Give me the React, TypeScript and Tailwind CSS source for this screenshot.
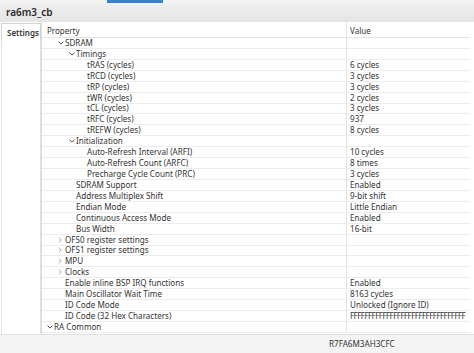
import React from "react";

type Row = { l: number; t: "e" | "c" | "x"; p: string; v?: string };

const rows: Row[] = [
  { l: 1, t: "e", p: "SDRAM" },
  { l: 2, t: "e", p: "Timings" },
  { l: 3, t: "x", p: "tRAS (cycles)", v: "6 cycles" },
  { l: 3, t: "x", p: "tRCD (cycles)", v: "3 cycles" },
  { l: 3, t: "x", p: "tRP (cycles)", v: "3 cycles" },
  { l: 3, t: "x", p: "tWR (cycles)", v: "2 cycles" },
  { l: 3, t: "x", p: "tCL (cycles)", v: "3 cycles" },
  { l: 3, t: "x", p: "tRFC (cycles)", v: "937" },
  { l: 3, t: "x", p: "tREFW (cycles)", v: "8 cycles" },
  { l: 2, t: "e", p: "Initialization" },
  { l: 3, t: "x", p: "Auto-Refresh Interval (ARFI)", v: "10 cycles" },
  { l: 3, t: "x", p: "Auto-Refresh Count (ARFC)", v: "8 times" },
  { l: 3, t: "x", p: "Precharge Cycle Count (PRC)", v: "3 cycles" },
  { l: 2, t: "x", p: "SDRAM Support", v: "Enabled" },
  { l: 2, t: "x", p: "Address Multiplex Shift", v: "9-bit shift" },
  { l: 2, t: "x", p: "Endian Mode", v: "Little Endian" },
  { l: 2, t: "x", p: "Continuous Access Mode", v: "Enabled" },
  { l: 2, t: "x", p: "Bus Width", v: "16-bit" },
  { l: 1, t: "c", p: "OFS0 register settings" },
  { l: 1, t: "c", p: "OFS1 register settings" },
  { l: 1, t: "c", p: "MPU" },
  { l: 1, t: "c", p: "Clocks" },
  { l: 1, t: "x", p: "Enable inline BSP IRQ functions", v: "Enabled" },
  { l: 1, t: "x", p: "Main Oscillator Wait Time", v: "8163 cycles" },
  { l: 1, t: "x", p: "ID Code Mode", v: "Unlocked (Ignore ID)" },
  { l: 1, t: "x", p: "ID Code (32 Hex Characters)", v: "FFFFFFFFFFFFFFFFFFFFFFFFFFFFFFFF" },
  { l: 0, t: "e", p: "RA Common" },
];

function Chevron({ open }: { open: boolean }) {
  if (open)
    return (
      <svg width="6" height="4" viewBox="0 0 6 4" className="block">
        <path d="M0.5 0.6 L3 3.1 L5.5 0.6" fill="none" stroke="#4a4a4a" strokeWidth="1" />
      </svg>
    );
  return (
    <svg width="4" height="6" viewBox="0 0 4 6" className="block">
      <path d="M0.8 0.6 L3.2 3 L0.8 5.4" fill="none" stroke="#a0a0a0" strokeWidth="0.9" />
    </svg>
  );
}

export default function App() {
  return (
    <div
      className="w-[474px] h-[353px] overflow-hidden bg-white flex flex-col text-[#333]"
      style={{ fontFamily: '"Noto Sans", "Open Sans", sans-serif' }}
    >
      <div className="h-[3px] bg-[#f4f4f4] flex">
        <div className="ml-[107px] w-[56px] h-[3px] bg-[#3c7fd0]" />
      </div>
      <div className="h-[19px] bg-gradient-to-b from-[#efefef] to-[#e4e4e4] flex items-center pl-[6px] text-[10px] font-semibold text-[#2b2b2b]">
        ra6m3_cb
      </div>
      <div className="flex flex-1 min-h-0">
        <div className="w-[42px] flex flex-col pt-[1px] pl-[1px] border-r border-[#dcdcdc]">
          <div className="h-[18px] w-[40px] border border-b-0 border-[#d2d2d2] bg-white flex items-center pl-[5px] text-[8px] font-semibold text-[#333]">
            Settings
          </div>
          <div className="flex-1 border-l border-r border-[#e2e2e2] bg-white" />
        </div>
        <div className="flex-1 flex flex-col pr-[4px]">
          <div className="h-[16px] flex border-b border-[#e3e3e3] text-[8px] items-center">
            <div className="w-[304px] pl-[5px] pt-[2px]">Property</div>
            <div className="flex-1 h-full border-l border-[#e3e3e3] pl-[3px] pt-[2px] flex items-center">Value</div>
          </div>
          {rows.map((r, i) => (
            <div
              key={i}
              className="h-[10.93px] flex border-b border-[#ececec] text-[8.1px] leading-none"
            >
              <div className="w-[304px] relative flex items-center whitespace-nowrap">
                {r.t !== "x" && (
                  <div
                    className="absolute top-0 bottom-0 flex items-center"
                    style={{ left: 5 + 11 * r.l }}
                  >
                    <Chevron open={r.t === "e"} />
                  </div>
                )}
                <span style={{ paddingLeft: 12 + 11 * r.l }}>{r.p}</span>
              </div>
              <div className="flex-1 border-l border-[#e3e3e3] pl-[3px] flex items-center whitespace-nowrap overflow-hidden">
                <span className={r.v && r.v.startsWith("FFFF") ? "tracking-[-0.6px]" : ""}>{r.v}</span>
              </div>
            </div>
          ))}
          <div className="flex-1" />
        </div>
      </div>
      <div className="h-[19px] bg-[#f3f3f3] border-t border-[#e0e0e0] flex items-center text-[8.1px] text-[#333]">
        <div className="ml-[329px]">R7FA6M3AH3CFC</div>
      </div>
    </div>
  );
}
